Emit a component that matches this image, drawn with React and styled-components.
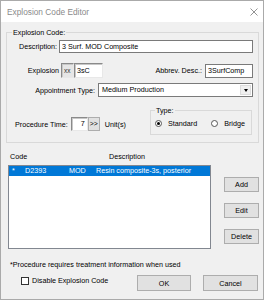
import React from 'react';
import styled, { createGlobalStyle } from 'styled-components';

const Global = createGlobalStyle`
  html, body { margin: 0; padding: 0; background: #fff; }
  body { font-family: "Liberation Sans", Arial, sans-serif; font-size: 7.2px; color: #000; }
  * { box-sizing: border-box; }
`;

const Window = styled.div`
  width: 264px;
  height: 300px;
  border: 1px solid #aaaaaa;
  background: #f0f0f0;
  display: flex;
  flex-direction: column;
`;

const TitleBar = styled.div`
  flex: none;
  height: 21px;
  background: #fff;
  display: flex;
  align-items: center;
  justify-content: space-between;
  padding: 1px 5px 0 6px;
`;

const Title = styled.span`
  font-size: 8.3px;
  color: #8a8a8a;
`;

const CloseX = styled.svg`
  width: 8px;
  height: 8px;
  display: block;
`;

const GroupBox = styled.div`
  margin: ${p => p.$m || '0'};
  height: ${p => p.$h}px;
  width: ${p => (p.$w ? `${p.$w}px` : 'auto')};
  border: 1px solid #d9d9d9;
  display: flex;
  flex-direction: column;
  flex: none;
`;

const Legend = styled.div`
  width: fit-content;
  margin: -5px 0 0 ${p => p.$ml}px;
  padding: 0 1px;
  background: #f0f0f0;
  line-height: 9px;
  height: 9px;
`;

const FormRow = styled.div`
  display: flex;
  align-items: center;
  margin-top: ${p => p.$mt}px;
  height: ${p => p.$h}px;
  padding-right: 5px;
`;

const Label = styled.span`
  flex: none;
  width: ${p => (p.$w ? `${p.$w}px` : 'auto')};
  text-align: ${p => (p.$w ? 'right' : 'left')};
  margin-left: ${p => (p.$auto ? 'auto' : '0')};
  margin-right: ${p => p.$mr || 0}px;
  white-space: nowrap;
  line-height: 9px;
`;

const TextBox = styled.div`
  flex: none;
  width: ${p => p.$w}px;
  height: ${p => p.$h || 13}px;
  background: #fff;
  border: 1px solid #7a7a7a;
  padding: 0 2px;
  line-height: ${p => (p.$h || 13) - 2}px;
  white-space: nowrap;
  overflow: hidden;
`;

const SunkenBox = styled.div`
  flex: none;
  width: ${p => p.$w}px;
  height: ${p => p.$h}px;
  background: ${p => (p.$gray ? '#e6e6e6' : '#fff')};
  border-style: solid;
  border-width: 1px;
  border-color: #8a8a8a #e8e8e8 #e8e8e8 #8a8a8a;
  box-shadow: inset 1px 1px 0 #c8c8c8;
  padding: 0 ${p => (p.$right ? 2 : 1)}px 0 ${p => (p.$right ? 1 : 2)}px;
  text-align: ${p => (p.$right ? 'right' : 'left')};
  line-height: ${p => p.$h - 2}px;
  color: ${p => (p.$gray ? '#333' : '#000')};
  font-size: ${p => (p.$small ? '6.5px' : '7.2px')};
  white-space: nowrap;
  overflow: hidden;
`;

const Select = styled.div`
  flex: none;
  width: 155px;
  height: 14px;
  background: #fff;
  border: 1px solid #7a7a7a;
  display: flex;
  align-items: stretch;
`;

const SelectText = styled.span`
  flex: 1;
  padding-left: 3px;
  line-height: 12px;
`;

const SelectArrow = styled.span`
  flex: none;
  width: 11px;
  margin: 1px;
  background: #f0f0f0;
  border: 1px solid #dcdcdc;
  display: flex;
  align-items: center;
  justify-content: center;
  &::after {
    content: '';
    border-left: 2.5px solid transparent;
    border-right: 2.5px solid transparent;
    border-top: 3px solid #000;
  }
`;

const BottomRow = styled.div`
  display: flex;
  align-items: flex-start;
  margin-top: ${p => p.$mt}px;
  padding: ${p => p.$pad};
`;

const ProcTime = styled.div`
  display: flex;
  align-items: center;
  margin: 7px 0 0 8px;
  height: 14px;
`;

const SmallButton = styled.div`
  flex: none;
  width: 12px;
  height: 14px;
  background: #e1e1e1;
  border: 1px solid #adadad;
  text-align: center;
  line-height: 12px;
  font-size: 6.8px;
`;

const RadioRow = styled.div`
  display: flex;
  align-items: center;
  margin: 4px 0 0 4px;
  height: 9px;
`;

const RadioItem = styled.div`
  display: flex;
  align-items: center;
  margin-left: ${p => p.$ml || 0}px;
`;

const RadioCircle = styled.span`
  flex: none;
  width: 7px;
  height: 7px;
  border-radius: 50%;
  border: 1px solid #555;
  background: #fff;
  margin-right: 6px;
  display: flex;
  align-items: center;
  justify-content: center;
  &::after {
    content: '';
    width: 3px;
    height: 3px;
    border-radius: 50%;
    background: ${p => (p.$on ? '#000' : 'transparent')};
  }
`;

const ListSection = styled.div`
  display: flex;
  margin: 9px 0 0 7px;
  flex: none;
`;

const ListColumn = styled.div`
  width: 203px;
  display: flex;
  flex-direction: column;
`;

const ListHeader = styled.div`
  display: grid;
  grid-template-columns: 99px 1fr;
  padding-left: 2px;
  height: 9px;
  line-height: 9px;
`;

const ListBox = styled.div`
  margin-top: 4px;
  height: 84px;
  background: #fff;
  border: 1px solid #828790;
`;

const ListRow = styled.div`
  display: grid;
  grid-template-columns: 13px 44px 27px 1fr;
  padding-left: 3px;
  height: 10px;
  line-height: 10px;
  background: ${p => (p.$selected ? '#0078d7' : 'transparent')};
  color: ${p => (p.$selected ? '#fff' : '#000')};
  white-space: nowrap;
`;

const ButtonColumn = styled.div`
  display: flex;
  flex-direction: column;
  gap: 11px;
  margin-left: 13px;
  padding-top: 25px;
`;

const Button = styled.div`
  flex: none;
  width: ${p => p.$w}px;
  height: ${p => p.$h || 15}px;
  margin-left: ${p => (p.$auto ? 'auto' : `${p.$ml || 0}px`)};
  background: #e1e1e1;
  border: 1px solid #adadad;
  display: flex;
  align-items: center;
  justify-content: center;
  line-height: 9px;
`;

const Footnote = styled.div`
  margin: 11px 0 0 9px;
  line-height: 9px;
  height: 9px;
`;

const CheckItem = styled.div`
  display: flex;
  align-items: center;
  margin-top: 1px;
  height: 9px;
`;

const CheckBox = styled.span`
  flex: none;
  width: 8px;
  height: 8px;
  background: #fff;
  border: 1px solid #333;
  margin-right: 3px;
`;

export default function App() {
  return (
    <>
      <Global />
      <Window>
        <TitleBar>
          <Title>Explosion Code Editor</Title>
          <CloseX viewBox="0 0 8 8">
            <path d="M0.5 0.5 L7.5 7.5 M7.5 0.5 L0.5 7.5" stroke="#777" strokeWidth="0.8" fill="none" />
          </CloseX>
        </TitleBar>

        <GroupBox $m="10px 4px 0 5px" $h={111}>
          <Legend $ml={5}>Explosion Code:</Legend>
          <FormRow $mt={3} $h={13}>
            <Label $w={50} $mr={2}>Description:</Label>
            <TextBox $w={194}>3 Surf. MOD Composite</TextBox>
          </FormRow>
          <FormRow $mt={10} $h={15}>
            <Label $w={52} $mr={2}>Explosion</Label>
            <SunkenBox $w={13} $h={15} $gray $small>xx</SunkenBox>
            <SunkenBox $w={29} $h={15}>3sC</SunkenBox>
            <Label $auto $mr={3}>Abbrev. Desc.:</Label>
            <TextBox $w={48} $h={14}>3SurfComp</TextBox>
          </FormRow>
          <FormRow $mt={5} $h={14}>
            <Label $w={88} $mr={3}>Appointment Type:</Label>
            <Select>
              <SelectText>Medium Production</SelectText>
              <SelectArrow />
            </Select>
          </FormRow>
          <BottomRow $mt={13} $pad="0 6px 0 0">
            <ProcTime>
              <Label $mr={3}>Procedure Time:</Label>
              <SunkenBox $w={17} $h={14} $right>7</SunkenBox>
              <SmallButton>&gt;&gt;</SmallButton>
              <Label style={{ marginLeft: 5 }}>Unit(s)</Label>
            </ProcTime>
            <GroupBox $m="0 0 0 auto" $h={25} $w={102}>
              <Legend $ml={4}>Type:</Legend>
              <RadioRow>
                <RadioItem>
                  <RadioCircle $on />
                  <span>Standard</span>
                </RadioItem>
                <RadioItem $ml={14}>
                  <RadioCircle />
                  <span>Bridge</span>
                </RadioItem>
              </RadioRow>
            </GroupBox>
          </BottomRow>
        </GroupBox>

        <ListSection>
          <ListColumn>
            <ListHeader>
              <span>Code</span>
              <span>Description</span>
            </ListHeader>
            <ListBox>
              <ListRow $selected>
                <span>*</span>
                <span>D2393</span>
                <span>MOD</span>
                <span>Resin composite-3s, posterior</span>
              </ListRow>
            </ListBox>
          </ListColumn>
          <ButtonColumn>
            <Button $w={35}>Add</Button>
            <Button $w={35}>Edit</Button>
            <Button $w={35}>Delete</Button>
          </ButtonColumn>
        </ListSection>

        <Footnote>*Procedure requires treatment information when used</Footnote>

        <BottomRow $mt={6} $pad="0 5px 0 20px">
          <CheckItem>
            <CheckBox />
            <span>Disable Explosion Code</span>
          </CheckItem>
          <Button $w={54} $h={16} $auto>OK</Button>
          <Button $w={55} $h={16} $ml={12}>Cancel</Button>
        </BottomRow>
      </Window>
    </>
  );
}
